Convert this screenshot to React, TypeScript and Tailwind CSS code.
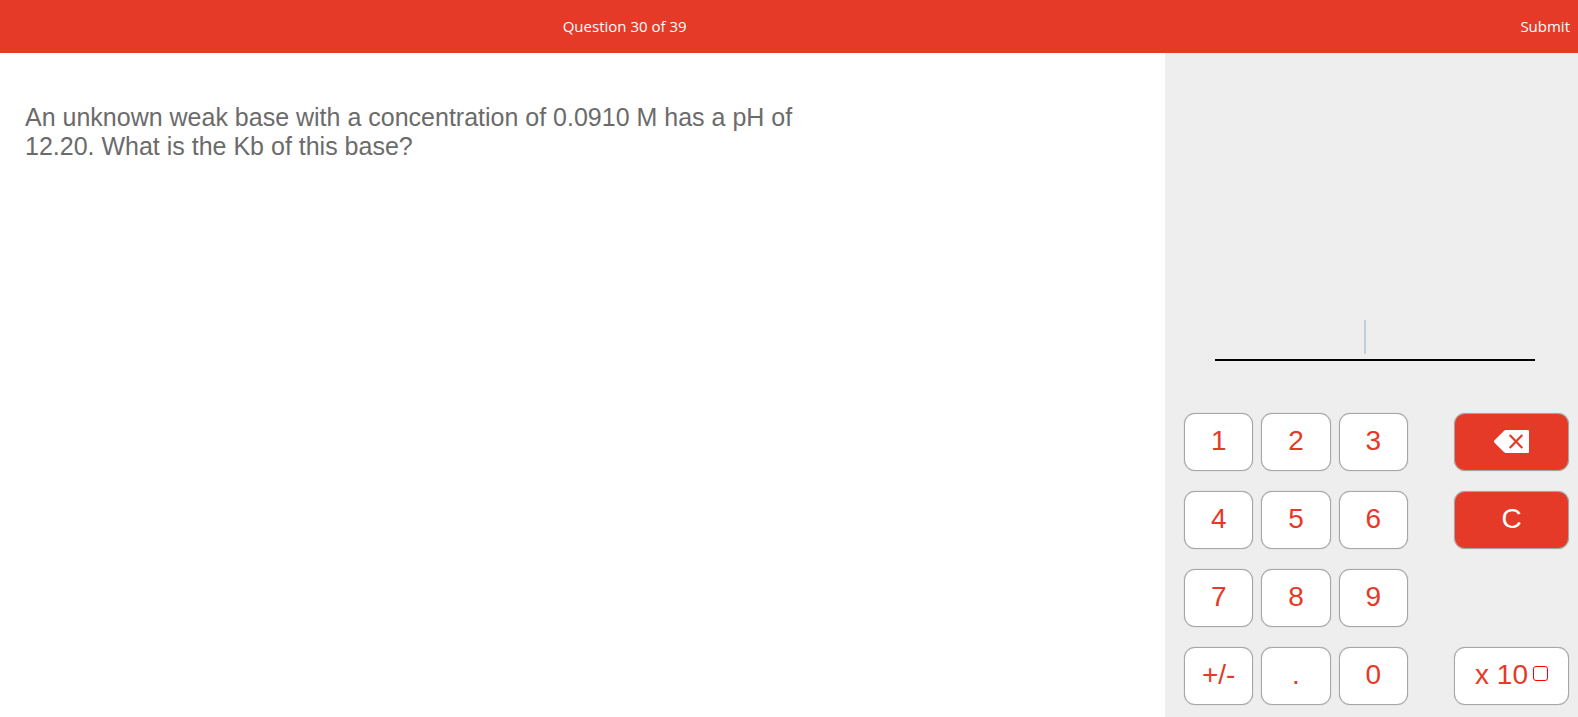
import { useState } from "react";

const keyBase =
  "flex h-[58px] cursor-pointer items-center justify-center rounded-[11px] border border-[#a6a6a6] pb-0.5 text-[28px] leading-8 shadow-[0_0_1px_#a6a6a6]";
const lightKey = `${keyBase} bg-white text-[#e53a27]`;
const redKey = `${keyBase} bg-[#e53a27] text-white`;

const digits = ["1", "2", "3", "4", "5", "6", "7", "8", "9", "+/-", ".", "0"];

function BackspaceIcon() {
  return (
    <svg width="35" height="23" viewBox="0 0 35 23" aria-hidden="true">
      <path
        fill="#fff"
        d="M12 0H34a1 1 0 0 1 1 1v21a1 1 0 0 1-1 1H12c-.8 0-1.500-.3-2.100-.9L.5 12.700a1.600 1.600 0 0 1 0-2.400L9.900.9C10.500.3 11.200 0 12 0z"
      />
      <path d="M15.700 5l12.600 13M28.300 5L15.700 18" stroke="#e53a27" strokeWidth="2.200" fill="none" />
    </svg>
  );
}

export default function App() {
  const [value, setValue] = useState("");

  const press = (key: string) => {
    if (key === "+/-") {
      setValue(value.startsWith("-") ? value.slice(1) : `-${value}`);
    } else if (key !== "." || !value.includes(".")) {
      setValue(value + key);
    }
  };

  return (
    <div className="flex min-h-screen flex-col bg-white font-['Liberation_Sans',Arial,sans-serif]">
      <header className="grid h-[53px] shrink-0 grid-cols-[19fr_5fr] items-center bg-[#e53a27] pb-0.5 font-['Open_Sans','Noto_Sans',sans-serif] text-[15px] leading-5 font-medium text-white">
        <h1 className="text-center">Question 30 of 39</h1>
        <button type="button" className="cursor-pointer justify-self-end px-2">
          Submit
        </button>
      </header>

      <main className="flex flex-1">
        <section className="min-w-0 flex-1 px-[25px] pt-[50px]">
          <p className="max-w-[784px] text-[25px] leading-[29px] text-[#6b6b6b]">
            An unknown weak base with a concentration of 0.0910 M has a pH of 12.20. What is the Kb of this base?
          </p>
        </section>

        <aside className="flex w-[413px] shrink-0 flex-col justify-end bg-[#eeeeee] pr-[9px] pb-3 pl-[19px]">
          <div className="relative mr-[34px] mb-[52px] ml-[31px]">
            <input
              type="text"
              aria-label="Answer"
              value={value}
              onChange={(event) => setValue(event.target.value)}
              className="block h-[46px] w-full border-b-2 border-black bg-transparent text-center text-[28px] text-black caret-[#bfd0dd] outline-none"
            />
            {value === "" && (
              <span className="pointer-events-none absolute top-[5px] left-[149px] h-[34px] w-0.5 bg-[#bfd0dd]" />
            )}
          </div>

          <div className="flex justify-between">
            <div className="grid w-[224px] grid-cols-3 gap-x-2 gap-y-5">
              {digits.map((key) => (
                <button key={key} type="button" className={lightKey} onClick={() => press(key)}>
                  {key}
                </button>
              ))}
            </div>

            <div className="grid w-[115px] grid-rows-4 gap-y-5">
              <button
                type="button"
                aria-label="Backspace"
                className={redKey}
                onClick={() => setValue(value.slice(0, -1))}
              >
                <BackspaceIcon />
              </button>
              <button type="button" className={redKey} onClick={() => setValue("")}>
                C
              </button>
              <button
                type="button"
                className={`${lightKey} row-start-4 gap-[5px]`}
                onClick={() => setValue(`${value}e`)}
              >
                x 10
                <span className="mb-1 size-[15px] rounded-[3px] border border-[#ff0000]" />
              </button>
            </div>
          </div>
        </aside>
      </main>
    </div>
  );
}
